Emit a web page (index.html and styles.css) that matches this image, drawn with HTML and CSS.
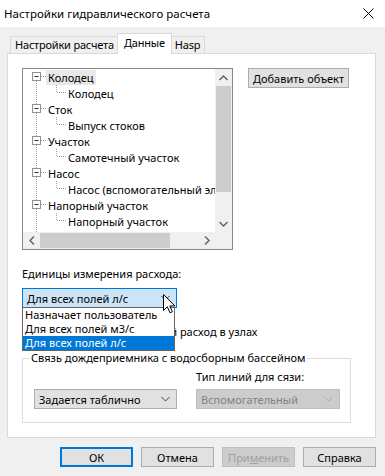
FILE: index.html
```html
<!DOCTYPE html>
<html lang="ru">
<head>
<meta charset="utf-8">
<title>Настройки гидравлического расчета</title>
<link rel="stylesheet" href="styles.css">
</head>
<body>
<div class="window">
  <div class="titlebar">
    <span class="title">Настройки гидравлического расчета</span>
    <svg class="close" width="11" height="11" viewBox="0 0 11 11"><path d="M0.5 0.5 L10.5 10.5 M10.5 0.5 L0.5 10.5" stroke="#000" stroke-width="1" fill="none"/></svg>
  </div>
  <div class="body">
    <div class="tabs">
      <div class="tab">Настройки расчета</div>
      <div class="tab active">Данные</div>
      <div class="tab">Hasp</div>
    </div>
    <div class="panel">
      <div class="top-row">
        <div class="tree">
          <div class="tree-main">
            <div class="tree-rows">
              <div class="row">
                <svg class="cn-root" width="23" height="16" viewBox="0 0 23 16"><path d="M13.5 8 V16" class="dot"/><path d="M18 7.5 H23" class="dot"/><rect x="9.5" y="3.5" width="8" height="8" class="box"/><path d="M11.5 7.5 H15.5" class="minus"/></svg>
                <span class="txt sel">Колодец</span>
              </div>
              <div class="row">
                <svg class="cn-child" width="43" height="16" viewBox="0 0 43 16"><path d="M13.5 0 V16" class="dot"/><path d="M33.5 0 V8" class="dot"/><path d="M34 7.5 H43" class="dot"/></svg>
                <span class="txt">Колодец</span>
              </div>
              <div class="row">
                <svg class="cn-root" width="23" height="16" viewBox="0 0 23 16"><path d="M13.5 0 V16" class="dot"/><path d="M18 7.5 H23" class="dot"/><rect x="9.5" y="3.5" width="8" height="8" class="box"/><path d="M11.5 7.5 H15.5" class="minus"/></svg>
                <span class="txt">Сток</span>
              </div>
              <div class="row">
                <svg class="cn-child" width="43" height="16" viewBox="0 0 43 16"><path d="M13.5 0 V16" class="dot"/><path d="M33.5 0 V8" class="dot"/><path d="M34 7.5 H43" class="dot"/></svg>
                <span class="txt">Выпуск стоков</span>
              </div>
              <div class="row">
                <svg class="cn-root" width="23" height="16" viewBox="0 0 23 16"><path d="M13.5 0 V16" class="dot"/><path d="M18 7.5 H23" class="dot"/><rect x="9.5" y="3.5" width="8" height="8" class="box"/><path d="M11.5 7.5 H15.5" class="minus"/></svg>
                <span class="txt">Участок</span>
              </div>
              <div class="row">
                <svg class="cn-child" width="43" height="16" viewBox="0 0 43 16"><path d="M13.5 0 V16" class="dot"/><path d="M33.5 0 V8" class="dot"/><path d="M34 7.5 H43" class="dot"/></svg>
                <span class="txt">Самотечный участок</span>
              </div>
              <div class="row">
                <svg class="cn-root" width="23" height="16" viewBox="0 0 23 16"><path d="M13.5 0 V16" class="dot"/><path d="M18 7.5 H23" class="dot"/><rect x="9.5" y="3.5" width="8" height="8" class="box"/><path d="M11.5 7.5 H15.5" class="minus"/></svg>
                <span class="txt">Насос</span>
              </div>
              <div class="row">
                <svg class="cn-child" width="43" height="16" viewBox="0 0 43 16"><path d="M13.5 0 V16" class="dot"/><path d="M33.5 0 V8" class="dot"/><path d="M34 7.5 H43" class="dot"/></svg>
                <span class="txt">Насос (вспомогательный элемент)</span>
              </div>
              <div class="row">
                <svg class="cn-root" width="23" height="16" viewBox="0 0 23 16"><path d="M13.5 0 V16" class="dot"/><path d="M18 7.5 H23" class="dot"/><rect x="9.5" y="3.5" width="8" height="8" class="box"/><path d="M11.5 7.5 H15.5" class="minus"/></svg>
                <span class="txt">Напорный участок</span>
              </div>
              <div class="row">
                <svg class="cn-child" width="43" height="16" viewBox="0 0 43 16"><path d="M13.5 0 V16" class="dot"/><path d="M33.5 0 V8" class="dot"/><path d="M34 7.5 H43" class="dot"/></svg>
                <span class="txt">Напорный участок</span>
              </div>
              <div class="row">
                <svg class="cn-root" width="23" height="16" viewBox="0 0 23 16"><path d="M13.5 0 V8" class="dot"/><path d="M18 7.5 H23" class="dot"/><rect x="9.5" y="3.5" width="8" height="8" class="box"/><path d="M11.5 7.5 H15.5" class="minus"/></svg>
                <span class="txt">Водосборный бассейн</span>
              </div>
            </div>
            <div class="vscroll">
              <div class="sb-btn"><svg width="9" height="6" viewBox="0 0 9 6"><path d="M0.5 5 L4.5 1 L8.5 5" class="chev"/></svg></div>
              <div class="vthumb"></div>
              <div class="sb-track"></div>
              <div class="sb-btn"><svg width="9" height="6" viewBox="0 0 9 6"><path d="M0.5 1 L4.5 5 L8.5 1" class="chev"/></svg></div>
            </div>
          </div>
          <div class="hscroll">
            <div class="sb-btn"><svg width="6" height="9" viewBox="0 0 6 9"><path d="M5 0.5 L1 4.5 L5 8.5" class="chev"/></svg></div>
            <div class="hthumb"></div>
            <div class="sb-track"></div>
            <div class="sb-btn"><svg width="6" height="9" viewBox="0 0 6 9"><path d="M1 0.5 L5 4.5 L1 8.5" class="chev"/></svg></div>
            <div class="sb-corner"></div>
          </div>
        </div>
        <button class="btn add">Добавить объект</button>
      </div>

      <div class="label">Единицы измерения расхода:</div>
      <div class="combo-wrap">
        <div class="combo focused">
          <span>Для всех полей л/с</span>
          <svg class="arrow" width="9" height="6" viewBox="0 0 9 6"><path d="M0.5 1 L4.5 5 L8.5 1" class="chev-dark"/></svg>
        </div>
        <div class="dropdown">
          <div class="item">Назначает пользователь</div>
          <div class="item">Для всех полей м3/с</div>
          <div class="item hl">Для всех полей л/с</div>
        </div>
        <svg class="cursor" width="13" height="20" viewBox="0 0 13 20"><path d="M0.5 0.5 L0.5 16.5 L4.3 12.8 L7 18.8 L9.4 17.8 L6.8 11.9 L11.8 11.9 Z" fill="#fff" stroke="#000" stroke-width="1" stroke-linejoin="miter"/></svg>
      </div>

      <div class="check-row">
        <span class="checkbox"></span>
        <span class="check-label">Задать дополнительный расход в узлах</span>
      </div>

      <fieldset class="group">
        <legend>Связь дождеприемника с водосборным бассейном</legend>
        <div class="group-grid">
          <div class="col">
            <div class="combo">
              <span>Задается таблично</span>
              <svg class="arrow" width="9" height="6" viewBox="0 0 9 6"><path d="M0.5 1 L4.5 5 L8.5 1" class="chev-dark"/></svg>
            </div>
          </div>
          <div class="col">
            <div class="small-label">Тип линий для сязи:</div>
            <div class="combo disabled">
              <span>Вспомогательный</span>
              <svg class="arrow" width="9" height="6" viewBox="0 0 9 6"><path d="M0.5 1 L4.5 5 L8.5 1" class="chev-dis"/></svg>
            </div>
          </div>
        </div>
      </fieldset>
    </div>

    <div class="buttons">
      <button class="btn dlg default">ОК</button>
      <button class="btn dlg">Отмена</button>
      <button class="btn dlg disabled">При<u>м</u>енить</button>
      <button class="btn dlg">Справка</button>
    </div>
  </div>
</div>
</body>
</html>
```

FILE: styles.css
```css
* { box-sizing: border-box; }
html, body { margin: 0; padding: 0; }
body {
  width: 385px;
  height: 476px;
  overflow: hidden;
  background: #f0f0f0;
  font-family: "Noto Sans", "Open Sans", sans-serif;
  font-size: 11px;
  color: #000;
}
.window {
  width: 385px;
  height: 476px;
  display: flex;
  flex-direction: column;
  background: #f0f0f0;
}
.titlebar {
  height: 27px;
  flex: none;
  background: #fff;
  display: flex;
  align-items: center;
  justify-content: space-between;
  padding: 0 11px 0 4px;
}
.title { font-size: 11.5px; line-height: 16px; }
.close { display: block; }

.body {
  flex: 1;
  display: flex;
  flex-direction: column;
  padding: 6px 9px 0 7px;
}

/* tabs */
.tabs {
  display: flex;
  align-items: flex-end;
  height: 21px;
  margin-bottom: -1px;
  padding-left: 3px;
}
.tab {
  height: 17px;
  margin-bottom: 1px;
  padding: 0 4px;
  line-height: 16px;
  background: #f0f0f0;
  border: 1px solid #d9d9d9;
  border-bottom: none;
  white-space: nowrap;
  letter-spacing: -0.2px;
}
.tab + .tab { border-left: none; }
.tab.active {
  position: relative;
  z-index: 1;
  height: 21px;
  margin: 0 -2px;
  padding: 0 6px;
  line-height: 18px;
  background: #fff;
  border-left: 1px solid #d9d9d9;
}
.tab.active + .tab { border-left: 1px solid #d9d9d9; }

.panel {
  height: 385px;
  flex: none;
  background: #fff;
  border: 1px solid #d9d9d9;
  padding: 14px 0 0 14px;
  display: flex;
  flex-direction: column;
  align-items: flex-start;
}

.top-row {
  display: flex;
  align-items: flex-start;
}

/* tree */
.tree {
  width: 211px;
  height: 182px;
  border: 1px solid #828790;
  display: flex;
  flex-direction: column;
}
.tree-main {
  height: 163px;
  display: flex;
}
.tree-rows {
  flex: 1;
  overflow: hidden;
  min-width: 0;
}
.row {
  height: 16px;
  display: flex;
  align-items: center;
  white-space: nowrap;
}
.row svg { display: block; flex: none; }
.txt {
  padding: 0 2px;
  line-height: 15px;
}
.txt.sel { background: #e8e8e8; }
.dot { stroke: #a0a0a0; stroke-width: 1; stroke-dasharray: 1 1; fill: none; }
.box { fill: #fff; stroke: #919191; stroke-width: 1; }
.minus { stroke: #333; stroke-width: 1; fill: none; }

.vscroll {
  width: 17px;
  flex: none;
  display: flex;
  flex-direction: column;
  background: #f0f0f0;
}
.sb-btn {
  width: 17px;
  height: 17px;
  flex: none;
  display: flex;
  align-items: center;
  justify-content: center;
  background: #f0f0f0;
}
.sb-btn svg { display: block; }
.vthumb {
  height: 106px;
  flex: none;
  margin: 0 1px;
  background: #cdcdcd;
}
.sb-track { flex: 1; background: #f0f0f0; }
.chev { stroke: #606060; stroke-width: 1.4; fill: none; }
.hscroll {
  height: 17px;
  display: flex;
  background: #f0f0f0;
}
.hthumb {
  width: 130px;
  flex: none;
  margin: 1px 0;
  background: #cdcdcd;
}
.sb-corner { width: 17px; flex: none; background: #f0f0f0; }

/* buttons */
.btn {
  font-family: inherit;
  font-size: 11px;
  color: #000;
  background: #e1e1e1;
  border: 1px solid #adadad;
  height: 20px;
  padding: 0;
  margin: 0;
  line-height: 17px;
}
.add {
  width: 101px;
  margin-left: 15px;
}

.label {
  margin-top: 17px;
  line-height: 14px;
}

/* combo */
.combo-wrap {
  position: relative;
  margin-top: 7px;
}
.combo {
  width: 155px;
  height: 20px;
  display: flex;
  align-items: center;
  justify-content: space-between;
  padding: 0 6px 0 4px;
  background: #e1e1e1;
  border: 1px solid #adadad;
  white-space: nowrap;
}
.combo.focused {
  background: #cce4f7;
  border-color: #0078d7;
}
.combo .arrow { display: block; }
.chev-dark { stroke: #404040; stroke-width: 1; fill: none; }
.chev-dis { stroke: #a8a8a8; stroke-width: 1; fill: none; }
.combo.disabled {
  width: 144px;
  background: #cccccc;
  border-color: #bfbfbf;
  color: #838383;
}
.dropdown {
  position: absolute;
  left: 0;
  top: 19px;
  width: 153px;
  border: 1px solid #646464;
  background: #fff;
  z-index: 2;
}
.item {
  height: 14px;
  line-height: 14px;
  padding-left: 2px;
  white-space: nowrap;
}
.item.hl { background: #0078d7; color: #fff; }
.cursor {
  position: absolute;
  left: 141px;
  top: 6px;
  z-index: 3;
  display: block;
}

.check-row {
  margin-top: 16px;
  display: flex;
  align-items: center;
  height: 14px;
  white-space: nowrap;
}
.checkbox {
  width: 13px;
  height: 13px;
  border: 1px solid #333;
  background: #fff;
  margin-right: 11px;
}

/* group */
.group {
  margin: 13px 0 0 0;
  width: 329px;
  border: 1px solid #dcdcdc;
  padding: 0 10px 13px 11px;
  min-inline-size: 0;
}
.group legend {
  padding: 0 2px;
  margin-left: -5px;
  line-height: 14px;
  white-space: nowrap;
}
.group-grid {
  padding-top: 5px;
  display: grid;
  grid-template-columns: 143px 144px;
  column-gap: 19px;
  align-items: end;
}
.group .combo { width: 143px; }
.group .combo.disabled { width: 144px; }
.small-label {
  line-height: 14px;
  margin-bottom: 5px;
}

.buttons {
  margin-top: 9px;
  display: flex;
  justify-content: flex-end;
  gap: 8px;
}
.dlg { width: 73px; }
.dlg.default { border: 2px solid #0078d7; }
.dlg.disabled {
  background: #cccccc;
  border-color: #bfbfbf;
  color: #a0a0a0;
}
```
